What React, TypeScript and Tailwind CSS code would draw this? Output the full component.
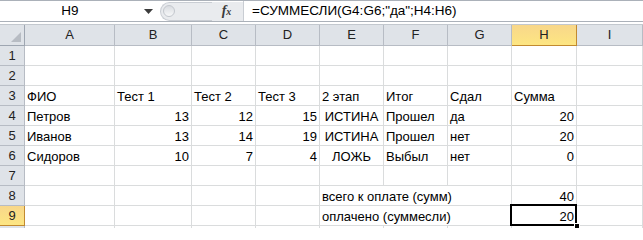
import React from "react";

type Cell = { v: string; a?: "l" | "r" | "c"; span?: number };

const cols = ["A", "B", "C", "D", "E", "F", "G", "H", "I"];

const rows: Cell[][] = [
  [],
  [],
  [
    { v: "ФИО" },
    { v: "Тест 1" },
    { v: "Тест 2" },
    { v: "Тест 3" },
    { v: "2 этап" },
    { v: "Итог" },
    { v: "Сдал" },
    { v: "Сумма" },
    { v: "" },
  ],
  [
    { v: "Петров" },
    { v: "13", a: "r" },
    { v: "12", a: "r" },
    { v: "15", a: "r" },
    { v: "ИСТИНА", a: "c" },
    { v: "Прошел" },
    { v: "да" },
    { v: "20", a: "r" },
    { v: "" },
  ],
  [
    { v: "Иванов" },
    { v: "13", a: "r" },
    { v: "14", a: "r" },
    { v: "19", a: "r" },
    { v: "ИСТИНА", a: "c" },
    { v: "Прошел" },
    { v: "нет" },
    { v: "20", a: "r" },
    { v: "" },
  ],
  [
    { v: "Сидоров" },
    { v: "10", a: "r" },
    { v: "7", a: "r" },
    { v: "4", a: "r" },
    { v: "ЛОЖЬ", a: "c" },
    { v: "Выбыл" },
    { v: "нет" },
    { v: "0", a: "r" },
    { v: "" },
  ],
  [],
  [
    { v: "" },
    { v: "" },
    { v: "" },
    { v: "" },
    { v: "всего к оплате (сумм)", span: 3 },
    { v: "40", a: "r" },
    { v: "" },
  ],
  [
    { v: "" },
    { v: "" },
    { v: "" },
    { v: "" },
    { v: "оплачено (суммесли)", span: 3 },
    { v: "20", a: "r" },
    { v: "" },
  ],
  [],
];

const emptyRow: Cell[] = cols.map(() => ({ v: "" }));

function FormulaBar() {
  return (
    <div className="flex h-[22px] border-y border-[#abb1b9] bg-white">
      <div className="flex w-[160px] items-center">
        <div className="w-[140px] text-center text-[13.5px] leading-none">H9</div>
        <svg width="9" height="5" viewBox="0 0 9 5" className="ml-[4px] mt-[1px]">
          <path d="M0 0h9L4.5 5z" fill="#3c3c3c" />
        </svg>
      </div>
      <div className="flex w-[83px] items-center">
        <div className="flex h-[19px] w-[52px] items-center rounded-l-full border border-r-0 border-[#c9cdd3] bg-[#e9ebee] pl-[2px]">
          <div className="h-[12px] w-[12px] rounded-full border border-[#c3c7cd] bg-gradient-to-b from-[#d9dce0] to-[#f7f8f9]" />
        </div>
        <div className="flex h-[19px] flex-1 items-center justify-center bg-[#e9ebee] pr-[2px]">
          <span className="font-['Liberation_Serif'] text-[14px] font-bold italic leading-none text-[#3a3a3a]">
            f<span className="text-[10px]">x</span>
          </span>
        </div>
      </div>
      <div className="flex flex-1 items-center border-l border-[#c9cdd3] pl-[8px] text-[13.5px] leading-none">
        =СУММЕСЛИ(G4:G6;"да";H4:H6)
      </div>
    </div>
  );
}

function HeaderRow() {
  return (
    <>
      <div className="relative h-[21px] border-r border-b border-[#9ea6b1] bg-[#dfe3e8]">
        <svg width="10" height="10" viewBox="0 0 10 10" className="absolute right-[3px] bottom-[3px]">
          <path d="M10 0V10H0z" fill="#b7bcc3" />
        </svg>
      </div>
      {cols.map((c) => (
        <div
          key={c}
          className={
            c === "H"
              ? "flex h-[21px] items-center justify-center border-r border-b border-[#c28a30] bg-gradient-to-b from-[#f8d78a] to-[#fde682] text-[13px] text-[#222]"
              : "flex h-[21px] items-center justify-center border-r border-b border-[#b7bcc4] bg-[#dfe3e8] text-[13px] text-[#222]"
          }
        >
          {c}
        </div>
      ))}
    </>
  );
}

export default function App() {
  return (
    <div className="h-[228px] w-[643px] overflow-hidden bg-white font-['Liberation_Sans',sans-serif] text-black">
      <FormulaBar />
      <div className="h-[2px] bg-white" />
      <div className="grid grid-cols-[25px_90px_77px_64px_64px_64px_64px_64px_65px_1fr] border-t border-[#c3c8ce]">
        <HeaderRow />
        {rows.map((r, i) => {
          const n = i + 1;
          const cells = r.length ? r : emptyRow;
          const sel = n === 9;
          return (
            <React.Fragment key={n}>
              <div
                className={
                  sel
                    ? "flex h-[20px] items-center justify-center border-r border-b border-[#c28a30] bg-gradient-to-b from-[#f8d78a] to-[#fde682] text-[13px] text-[#222]"
                    : "flex h-[20px] items-center justify-center border-r border-b border-[#b7bcc4] bg-[#dfe3e8] text-[13px] text-[#222]"
                }
              >
                {n}
              </div>
              {cells.map((c, j) => {
                const isSel = sel && c.v === "20";
                const span = c.span === 3 ? "col-span-3" : "";
                const align =
                  c.a === "r" ? "justify-end pr-[2px]" : c.a === "c" ? "justify-center" : "justify-start pl-[2px]";
                return (
                  <div
                    key={j}
                    className={`relative flex h-[20px] items-end border-r border-b border-[#dadcdd] pb-[1px] text-[13px] leading-[15px] whitespace-nowrap ${span} ${align}`}
                  >
                    {c.v}
                    {isSel && (
                      <>
                        <div className="pointer-events-none absolute -top-[2px] -left-[2px] -right-[1px] -bottom-[1px] border-2 border-black" />
                        <div className="absolute -right-[4px] -bottom-[4px] z-10 h-[6px] w-[6px] border border-white bg-black" />
                      </>
                    )}
                  </div>
                );
              })}
            </React.Fragment>
          );
        })}
      </div>
    </div>
  );
}
